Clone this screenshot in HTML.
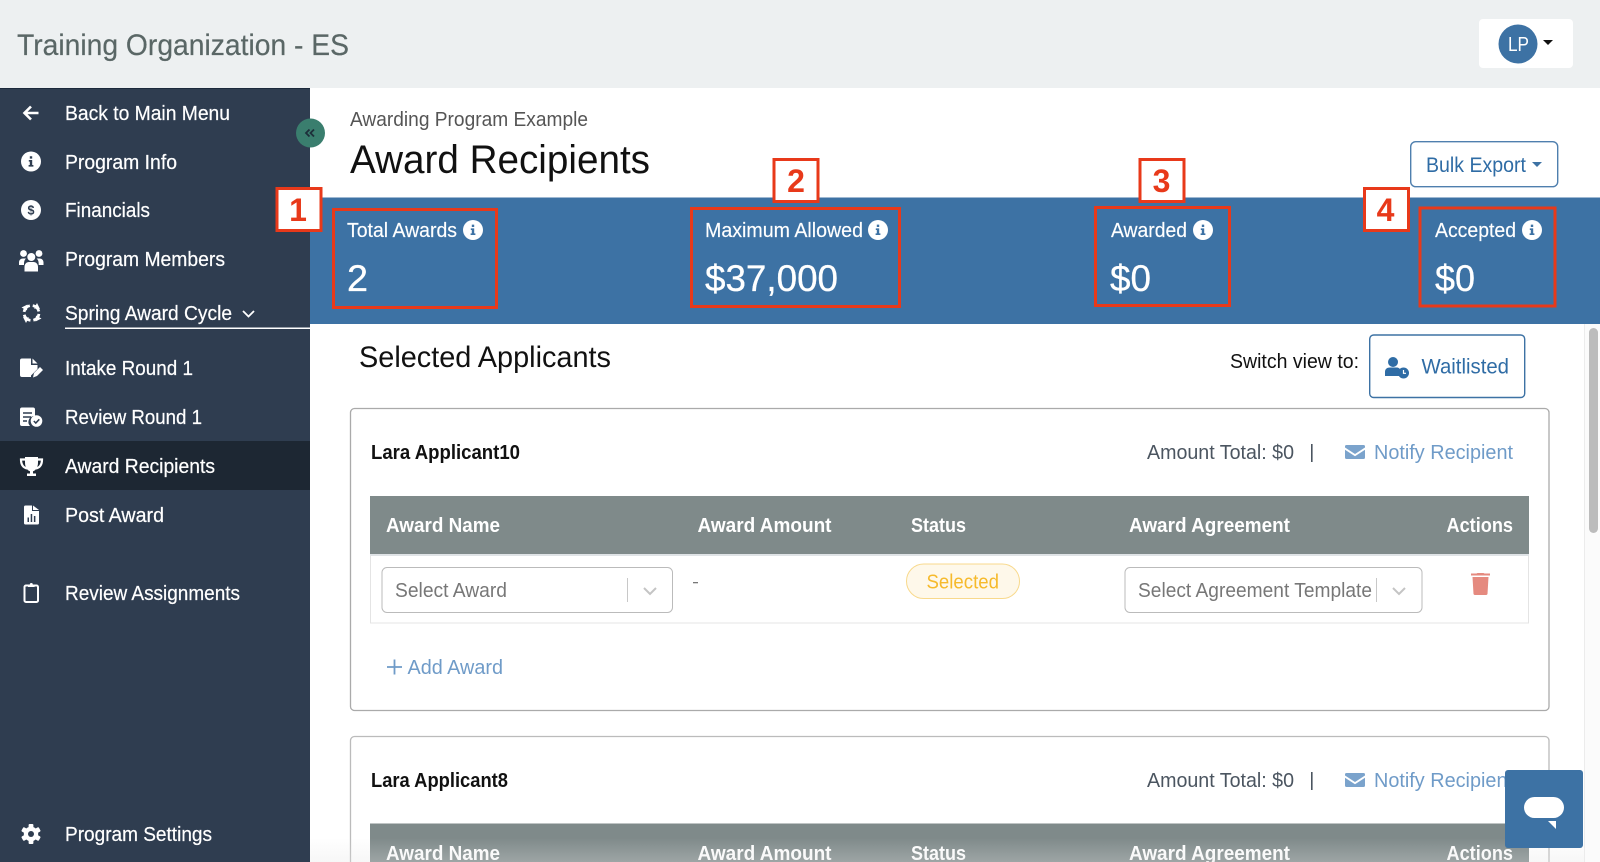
<!DOCTYPE html>
<html lang="en">
<head>
<meta charset="utf-8">
<title>Award Recipients</title>
<style>
html,body{margin:0;padding:0;width:1600px;height:862px;overflow:hidden;background:#fff}
svg{display:block;width:1600px;height:862px}
text{font-family:"Liberation Sans",Arial,sans-serif;white-space:pre}
.m{fill:#fff;font-size:20px;stroke:#fff;stroke-width:.2px}
.h{fill:#fff;font-size:20px;font-weight:700}
.l{fill:#fff;font-size:20px;stroke:#fff;stroke-width:.15px}
.v{fill:#fff;font-size:37px;stroke:#fff;stroke-width:.3px}
.n{fill:#e8391a;font-size:32px;font-weight:700;text-anchor:middle}
.g{fill:#777;font-size:20px}
.b{fill:#6f9bc8;font-size:20px}
.a{fill:#4b5560;font-size:20px}
.k{fill:#111;font-size:20px;font-weight:700}
</style>
</head>
<body>
<svg width="1600" height="862" viewBox="0 0 1600 862" xmlns="http://www.w3.org/2000/svg">
<defs>
<linearGradient id="fade" x1="0" y1="0" x2="0" y2="1"><stop offset="0" stop-color="#e4e4e4" stop-opacity="0"/><stop offset="1" stop-color="#e4e4e4" stop-opacity=".3"/></linearGradient>
<g id="info"><circle r="10" fill="#fff"/><path d="M-2.2-1.6H1.2V3.4H2.4V5H-2.4V3.4H-1.2V0H-2.2ZM-1.2-5.4H1.2V-3H-1.2Z" fill="#3d72a4"/></g>
<path id="chev" d="M-6-3L0 3L6-3" fill="none" stroke="#c4c4c4" stroke-width="2"/>
<path id="env" d="M0 2.5A1.5 1.5 0 0 1 1.5 1H18.5A1.5 1.5 0 0 1 20 2.5V3.5L10 10L0 3.5ZM0 5.8L10 12.3L20 5.8V13.5A1.5 1.5 0 0 1 18.5 15H1.5A1.5 1.5 0 0 1 0 13.5Z" fill="#7ba3cc"/>
</defs>

<!-- header -->
<rect width="1600" height="88" fill="#edf0f1"/>
<text x="17" y="55" font-size="30" fill="#5a6766" stroke="#5a6766" stroke-width=".2" textLength="332" lengthAdjust="spacingAndGlyphs">Training Organization - ES</text>
<rect x="1479" y="19" width="94" height="49" rx="4" fill="#fff"/>
<circle cx="1518" cy="44" r="19.5" fill="#3d72a4"/>
<text x="1508" y="51" font-size="20" fill="#fff" textLength="21" lengthAdjust="spacingAndGlyphs">LP</text>
<path d="M1543 40H1553L1548 45Z" fill="#111"/>

<!-- sidebar -->
<rect y="88" width="310" height="774" fill="#2f3d50"/>
<rect y="88" width="310" height="1" fill="#1c2a3c"/>
<rect y="441" width="310" height="49" fill="#1d2733"/>
<rect x="65" y="327.5" width="245" height="1.5" fill="#fff"/>

<path d="M38.5 113H24.5M31 106.5L24.5 113L31 119.5" fill="none" stroke="#fff" stroke-width="2.6"/>
<circle cx="31" cy="161.5" r="10" fill="#fff"/><path d="M28.8 160H32.2V165H33.4V166.6H28.6V165H29.8V161.6H28.8ZM29.8 156.2H32.2V158.6H29.8Z" fill="#2f3d50"/>
<circle cx="31" cy="210" r="10" fill="#fff"/><text x="31" y="214.5" font-size="12.5" font-weight="700" fill="#2f3d50" text-anchor="middle">$</text>

<!-- users -->
<g fill="#fff">
<circle cx="23.5" cy="253.5" r="3.4"/><circle cx="39" cy="253.5" r="3.4"/><circle cx="31.3" cy="257" r="4"/>
<path d="M19 265V262.5C19 260 20.7 258.5 23 258.5H26C24.5 259.8 24 261.5 24 264.5V265Z"/>
<path d="M43.5 265V262.5C43.5 260 41.8 258.5 39.5 258.5H36.6C38.2 259.8 38.7 261.5 38.7 264.5V265Z"/>
<path d="M24.5 271.5V267C24.5 264 26.5 262 29 262H33.5C36 262 38 264 38 267V271.5Z"/>
</g>

<!-- cycle: four arc arrows forming a ring -->
<g transform="translate(31.5 313)">
<circle r="7.5" fill="none" stroke="#fff" stroke-width="2.8" stroke-dasharray="8.8 3" stroke-dashoffset="-1"/>
<g fill="#fff">
<path d="M-10-5.5L-4-8.5L-4.5-2.5Z"/>
<path d="M5.5-10L8.5-4L2.5-4.5Z"/>
<path d="M10 5.5L4 8.5L4.5 2.5Z"/>
<path d="M-5.5 10L-8.5 4L-2.5 4.5Z"/>
</g>
</g>

<!-- intake -->
<path d="M20 360.5A2 2 0 0 1 22 358.5H31V365H37.5V369L31 375.5V377H22A2 2 0 0 1 20 375Z" fill="#fff"/>
<path d="M32.5 358.5L37.5 363.5H32.5Z" fill="#fff"/>
<path d="M33 377.5L34 373L40 367L43 370L37 376Z" fill="#fff"/>

<!-- review -->
<path d="M20 409.5A2 2 0 0 1 22 407.5H33A2 2 0 0 1 35 409.5V416A6 6 0 0 0 30 426H22A2 2 0 0 1 20 424Z" fill="#fff"/>
<path d="M23 413H32M23 417H31M23 421H27" stroke="#2f3d50" stroke-width="1.5"/>
<circle cx="36.5" cy="421" r="5.8" fill="#fff"/>
<path d="M33.8 421L35.8 423L39.3 419.3" fill="none" stroke="#2f3d50" stroke-width="1.5"/>

<!-- trophy -->
<path d="M25 457H38V462.5C38 468 35 471.5 31.5 471.5C28 471.5 25 468 25 462.5Z" fill="#fff"/>
<path d="M25 459.5H21C21 464.5 23 467.5 27 468.5M38 459.5H42C42 464.5 40 467.5 36 468.5" fill="none" stroke="#fff" stroke-width="2.2"/>
<path d="M30 470.5H33V473.5H36V476H27V473.5H30Z" fill="#fff"/>

<!-- post award -->
<path d="M24 507A1.5 1.5 0 0 1 25.5 505.5H32V511H39V523A1.5 1.5 0 0 1 37.5 524.5H25.5A1.5 1.5 0 0 1 24 523Z" fill="#fff"/>
<path d="M33 505.5L39 510H33Z" fill="#fff"/>
<path d="M27.5 517.5H29V522H27.5ZM30.7 514H32.2V522H30.7ZM33.9 516H35.4V522H33.9Z" fill="#2f3d50"/>

<!-- clipboard -->
<rect x="24.5" y="585.5" width="13.5" height="16.5" rx="1.5" fill="none" stroke="#fff" stroke-width="2"/>
<path d="M28 587V584.5H29.8A1.5 1.5 0 0 1 32.8 584.5H34.6V587Z" fill="#fff"/>

<!-- gear -->
<g transform="translate(31 834)" fill="#fff">
<rect x="-2.4" y="-10" width="4.8" height="20" rx="1"/>
<rect x="-2.4" y="-10" width="4.8" height="20" rx="1" transform="rotate(60)"/>
<rect x="-2.4" y="-10" width="4.8" height="20" rx="1" transform="rotate(120)"/>
<circle r="7.2"/><circle r="3" fill="#2f3d50"/>
</g>

<text class="m" x="65" y="120" textLength="165" lengthAdjust="spacingAndGlyphs">Back to Main Menu</text>
<text class="m" x="65" y="169" textLength="112" lengthAdjust="spacingAndGlyphs">Program Info</text>
<text class="m" x="65" y="217" textLength="85" lengthAdjust="spacingAndGlyphs">Financials</text>
<text class="m" x="65" y="266" textLength="160" lengthAdjust="spacingAndGlyphs">Program Members</text>
<text class="m" x="65" y="320" textLength="167" lengthAdjust="spacingAndGlyphs">Spring Award Cycle</text>
<path d="M243 311L248.5 316.5L254 311" fill="none" stroke="#fff" stroke-width="1.8"/>
<text class="m" x="65" y="375" textLength="128" lengthAdjust="spacingAndGlyphs">Intake Round 1</text>
<text class="m" x="65" y="424" textLength="137" lengthAdjust="spacingAndGlyphs">Review Round 1</text>
<text class="m" x="65" y="473" textLength="150" lengthAdjust="spacingAndGlyphs">Award Recipients</text>
<text class="m" x="65" y="522" textLength="99" lengthAdjust="spacingAndGlyphs">Post Award</text>
<text class="m" x="65" y="600" textLength="175" lengthAdjust="spacingAndGlyphs">Review Assignments</text>
<text class="m" x="65" y="841" textLength="147" lengthAdjust="spacingAndGlyphs">Program Settings</text>

<!-- page heading -->
<text x="350" y="126" font-size="20" fill="#555" textLength="238" lengthAdjust="spacingAndGlyphs">Awarding Program Example</text>
<text x="350" y="173" font-size="40" fill="#111" textLength="300" lengthAdjust="spacingAndGlyphs">Award Recipients</text>
<rect x="1410.7" y="141.7" width="147" height="45" rx="5" fill="#fff" stroke="#4f7fae" stroke-width="1.4"/>
<text x="1426" y="172" font-size="21" fill="#2f6ca5" textLength="100" lengthAdjust="spacingAndGlyphs">Bulk Export</text>
<path d="M1532 162H1542L1537 167Z" fill="#3d72a4"/>

<!-- band -->
<rect x="310" y="197.5" width="1290" height="126.5" fill="#3d72a4"/>
<text class="l" x="347" y="237" textLength="110" lengthAdjust="spacingAndGlyphs">Total Awards</text>
<text class="v" x="347" y="291" textLength="21" lengthAdjust="spacingAndGlyphs">2</text>
<use href="#info" x="473" y="230"/>
<text class="l" x="705" y="237" textLength="158" lengthAdjust="spacingAndGlyphs">Maximum Allowed</text>
<text class="v" x="705" y="291" textLength="133" lengthAdjust="spacingAndGlyphs">$37,000</text>
<use href="#info" x="878" y="230"/>
<text class="l" x="1111" y="237" textLength="76" lengthAdjust="spacingAndGlyphs">Awarded</text>
<text class="v" x="1110" y="291" textLength="41" lengthAdjust="spacingAndGlyphs">$0</text>
<use href="#info" x="1203" y="230"/>
<text class="l" x="1435" y="237" textLength="81" lengthAdjust="spacingAndGlyphs">Accepted</text>
<text class="v" x="1435" y="291" textLength="40" lengthAdjust="spacingAndGlyphs">$0</text>
<use href="#info" x="1532" y="230"/>

<!-- red annotation boxes -->
<g fill="none" stroke="#e8391a" stroke-width="3">
<rect x="333.5" y="209.5" width="163" height="98"/>
<rect x="691.5" y="208.5" width="208" height="98"/>
<rect x="1095.5" y="207.5" width="134" height="98"/>
<rect x="1420" y="208" width="135" height="98"/>
</g>
<g fill="#fff" stroke="#e8391a" stroke-width="3">
<rect x="277" y="188.5" width="44" height="42"/>
<rect x="774" y="159.5" width="44" height="42"/>
<rect x="1140" y="159.5" width="44" height="42"/>
<rect x="1364.5" y="188.5" width="44" height="42"/>
</g>
<text class="n" x="298" y="221">1</text>
<text class="n" x="796" y="192">2</text>
<text class="n" x="1161.5" y="192">3</text>
<text class="n" x="1385.5" y="221">4</text>

<!-- collapse button -->
<circle cx="310.5" cy="133" r="14.5" fill="#3a7e6e"/>
<path d="M309.5 129.5L306 133L309.5 136.5M314 129.5L310.5 133L314 136.5" fill="none" stroke="#1d2f3a" stroke-width="1.8"/>

<!-- selected applicants header -->
<text x="359" y="367" font-size="30" fill="#111" textLength="252" lengthAdjust="spacingAndGlyphs">Selected Applicants</text>
<text x="1230" y="368" font-size="20" fill="#111" textLength="129" lengthAdjust="spacingAndGlyphs">Switch view to:</text>
<rect x="1369.7" y="335" width="155" height="62.5" rx="4" fill="#fff" stroke="#3d72a4" stroke-width="1.4"/>
<circle cx="1393" cy="362" r="5" fill="#2f6ca5"/>
<path d="M1385 376V372C1385 369 1387 367.5 1390 367.5H1397C1398 367.5 1399 368 1400 369A8 8 0 0 0 1399.5 376Z" fill="#2f6ca5"/>
<circle cx="1403.5" cy="373" r="5.5" fill="#2f6ca5"/><path d="M1403.5 370V373.3H1406" fill="none" stroke="#fff" stroke-width="1.2"/>
<text x="1421.5" y="373.5" font-size="21" fill="#2f6ca5" textLength="87.5" lengthAdjust="spacingAndGlyphs">Waitlisted</text>

<!-- card 1 -->
<rect x="350.5" y="408.5" width="1198.5" height="302" rx="4" fill="#fff" stroke="#aaa" stroke-width="1.3"/>
<text class="k" x="371" y="459" textLength="149" lengthAdjust="spacingAndGlyphs">Lara Applicant10</text>
<text class="a" x="1147" y="459" textLength="147" lengthAdjust="spacingAndGlyphs">Amount Total: $0</text>
<rect x="1311" y="444" width="1.6" height="18" fill="#4b5560"/>
<use href="#env" x="1345" y="444"/>
<text class="b" x="1374" y="459" textLength="139" lengthAdjust="spacingAndGlyphs">Notify Recipient</text>
<rect x="370.5" y="554" width="1158" height="69" fill="#fff" stroke="#e4e4e4"/>
<rect x="370" y="496" width="1159" height="58" fill="#7f8a8a"/>
<rect x="370" y="554" width="1159" height="2" fill="#dfe3e6"/>
<text class="h" x="386" y="532" textLength="114" lengthAdjust="spacingAndGlyphs">Award Name</text>
<text class="h" x="697.5" y="532" textLength="134" lengthAdjust="spacingAndGlyphs">Award Amount</text>
<text class="h" x="911" y="532" textLength="55" lengthAdjust="spacingAndGlyphs">Status</text>
<text class="h" x="1129" y="532" textLength="161" lengthAdjust="spacingAndGlyphs">Award Agreement</text>
<text class="h" x="1446.5" y="532" textLength="66.5" lengthAdjust="spacingAndGlyphs">Actions</text>
<rect x="382" y="567.5" width="290.5" height="45" rx="5" fill="#fff" stroke="#bbb"/>
<text class="g" x="395" y="597" textLength="112" lengthAdjust="spacingAndGlyphs">Select Award</text>
<rect x="627" y="578" width="1" height="24" fill="#c8c8c8"/>
<use href="#chev" x="650" y="591"/>
<rect x="693" y="582" width="5" height="1.3" fill="#777"/>
<rect x="906.5" y="564" width="113" height="34.5" rx="17.2" fill="#fef8ea" stroke="#f8d98c"/>
<text x="926.5" y="588.5" font-size="20" fill="#f6ba2c" textLength="72.5" lengthAdjust="spacingAndGlyphs">Selected</text>
<rect x="1125" y="567.5" width="297" height="45" rx="5" fill="#fff" stroke="#bbb"/>
<text class="g" x="1138" y="597" textLength="234" lengthAdjust="spacingAndGlyphs">Select Agreement Template</text>
<rect x="1376" y="578" width="1" height="24" fill="#c8c8c8"/>
<use href="#chev" x="1399" y="591"/>
<path d="M1476.5 573.5L1477.5 573H1483.5L1484.5 573.5H1490V575.5H1471V573.5ZM1472.5 577H1488.5L1487.5 594A1.5 1.5 0 0 1 1486 595H1475A1.5 1.5 0 0 1 1473.5 594Z" fill="#e58a7f"/>
<path d="M387 667H402M394.5 659.5V674.5" stroke="#6f9bc8" stroke-width="1.8" fill="none"/>
<text class="b" x="407.5" y="674" textLength="95.5" lengthAdjust="spacingAndGlyphs">Add Award</text>

<!-- card 2 (continues below the fold) -->
<path d="M350.5 862V740.5A4 4 0 0 1 354.5 736.5H1545A4 4 0 0 1 1549 740.5V862" fill="#fff" stroke="#bbb" stroke-width="1.3"/>
<text class="k" x="371" y="787" textLength="137" lengthAdjust="spacingAndGlyphs">Lara Applicant8</text>
<text class="a" x="1147" y="787" textLength="147" lengthAdjust="spacingAndGlyphs">Amount Total: $0</text>
<rect x="1311" y="772" width="1.6" height="18" fill="#4b5560"/>
<use href="#env" x="1345" y="772"/>
<text class="b" x="1374" y="787" textLength="139" lengthAdjust="spacingAndGlyphs">Notify Recipient</text>
<rect x="370" y="823.5" width="1159" height="38.5" fill="#7f8a8a"/>
<text class="h" x="386" y="860" textLength="114" lengthAdjust="spacingAndGlyphs">Award Name</text>
<text class="h" x="697.5" y="860" textLength="134" lengthAdjust="spacingAndGlyphs">Award Amount</text>
<text class="h" x="911" y="860" textLength="55" lengthAdjust="spacingAndGlyphs">Status</text>
<text class="h" x="1129" y="860" textLength="161" lengthAdjust="spacingAndGlyphs">Award Agreement</text>
<text class="h" x="1446.5" y="860" textLength="66.5" lengthAdjust="spacingAndGlyphs">Actions</text>

<!-- bottom fade -->
<rect x="310" y="838" width="1290" height="24" fill="url(#fade)"/>

<!-- scrollbar -->
<rect x="1584" y="324" width="16" height="538" fill="#fbfbfb"/>
<rect x="1584" y="324" width="1" height="538" fill="#ececec"/>
<rect x="1589" y="328" width="9" height="205" rx="4.5" fill="#bcbcbc"/>

<!-- chat widget -->
<rect x="1505" y="770" width="78" height="78" rx="3" fill="#3d72a4"/>
<rect x="1524" y="797" width="40" height="21" rx="10.5" fill="#fff"/>
<path d="M1548 821H1556V829Z" fill="#fff"/>
</svg>
</body>
</html>
